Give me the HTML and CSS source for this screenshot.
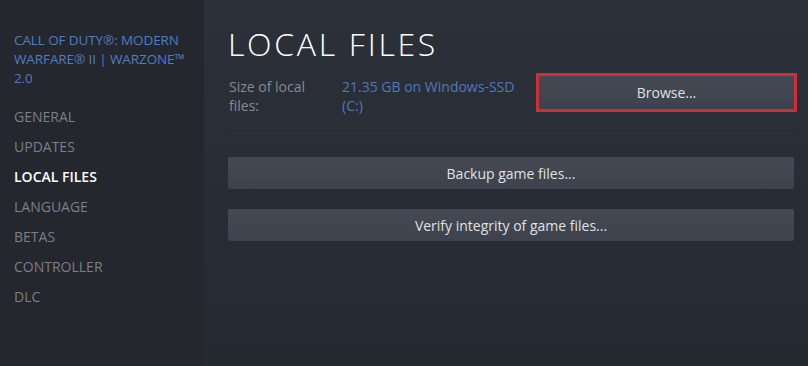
FILE: index.html
```html
<!DOCTYPE html>
<html lang="en">
<head>
<meta charset="utf-8">
<title>Local Files</title>
<link rel="stylesheet" href="styles.css">
</head>
<body>
<div class="app">
  <nav class="sidebar">
    <div class="game-title">CALL OF DUTY®: MODERN WARFARE® II | WARZONE™ 2.0</div>
    <ul class="menu">
      <li class="menu-item">GENERAL</li>
      <li class="menu-item">UPDATES</li>
      <li class="menu-item active">LOCAL FILES</li>
      <li class="menu-item">LANGUAGE</li>
      <li class="menu-item">BETAS</li>
      <li class="menu-item">CONTROLLER</li>
      <li class="menu-item">DLC</li>
    </ul>
  </nav>
  <main class="content">
    <h1 class="page-title">LOCAL FILES</h1>
    <div class="info-row">
      <div class="info-label">Size of local files:</div>
      <div class="info-value">21.35 GB on Windows-SSD (C:)</div>
      <div class="browse-wrap"><button class="btn browse">Browse...</button></div>
    </div>
    <div class="separator"></div>
    <div class="actions">
      <button class="btn wide">Backup game files...</button>
      <button class="btn wide">Verify integrity of game files...</button>
    </div>
  </main>
</div>
</body>
</html>
```

FILE: styles.css
```css
* { box-sizing: border-box; }
html, body { margin: 0; padding: 0; height: 100%; }
body {
  background: #23262c;
  font-family: "Open Sans", "Noto Sans", "Liberation Sans", sans-serif;
  font-size: 14px;
  overflow: hidden;
}
.app {
  display: flex;
  height: 366px;
}
.sidebar {
  width: 204px;
  flex: none;
  background: #24272d;
  padding: 31px 10px 0 14px;
}
.game-title {
  color: #4f7dc3;
  font-size: 13.5px;
  line-height: 19px;
  letter-spacing: -0.1px;
  margin-bottom: 14px;
}
.menu {
  list-style: none;
  margin: 0;
  padding: 0;
}
.menu-item {
  color: #7b7f86;
  font-size: 14px;
  line-height: 30px;
  height: 30px;
}
.menu-item.active {
  color: #ffffff;
  font-weight: 600;
}
.content {
  flex: 1;
  padding: 25px 14px 0 24px;
  background: linear-gradient(180deg, #2c3039 0%, #282c34 55%, #252930 100%);
}
.page-title {
  margin: 0 0 14px 0;
  color: #ffffff;
  font-weight: 300;
  font-size: 32px;
  line-height: 37px;
  letter-spacing: 2.7px;
}
.info-row {
  display: grid;
  grid-template-columns: 113px 1fr 254px;
  align-items: start;
  margin-left: 1px;
}
.info-label {
  color: #868b93;
  line-height: 19px;
  padding-top: 1px;
  width: 90px;
}
.info-value {
  color: #4f78be;
  line-height: 19px;
  padding-top: 1px;
  max-width: 180px;
}
.browse-wrap {
  margin-left: -1px;
}
.btn {
  display: block;
  width: 100%;
  border: none;
  font-family: inherit;
  font-size: 14px;
  color: #dfe2e5;
  background: linear-gradient(180deg, #444953 0%, #3d424c 100%);
  border-radius: 2px;
  padding: 0;
  cursor: pointer;
}
.browse {
  height: 33px;
  border-radius: 0;
  box-shadow: 0 0 0 3px #cc2f3a;
}
.separator {
  height: 1px;
  margin: 18px 0 0 0;
  background: rgba(255,255,255,0.03);
}
.actions {
  display: flex;
  flex-direction: column;
  gap: 20px;
  margin-top: 23px;
}
.wide {
  height: 32px;
}
```
